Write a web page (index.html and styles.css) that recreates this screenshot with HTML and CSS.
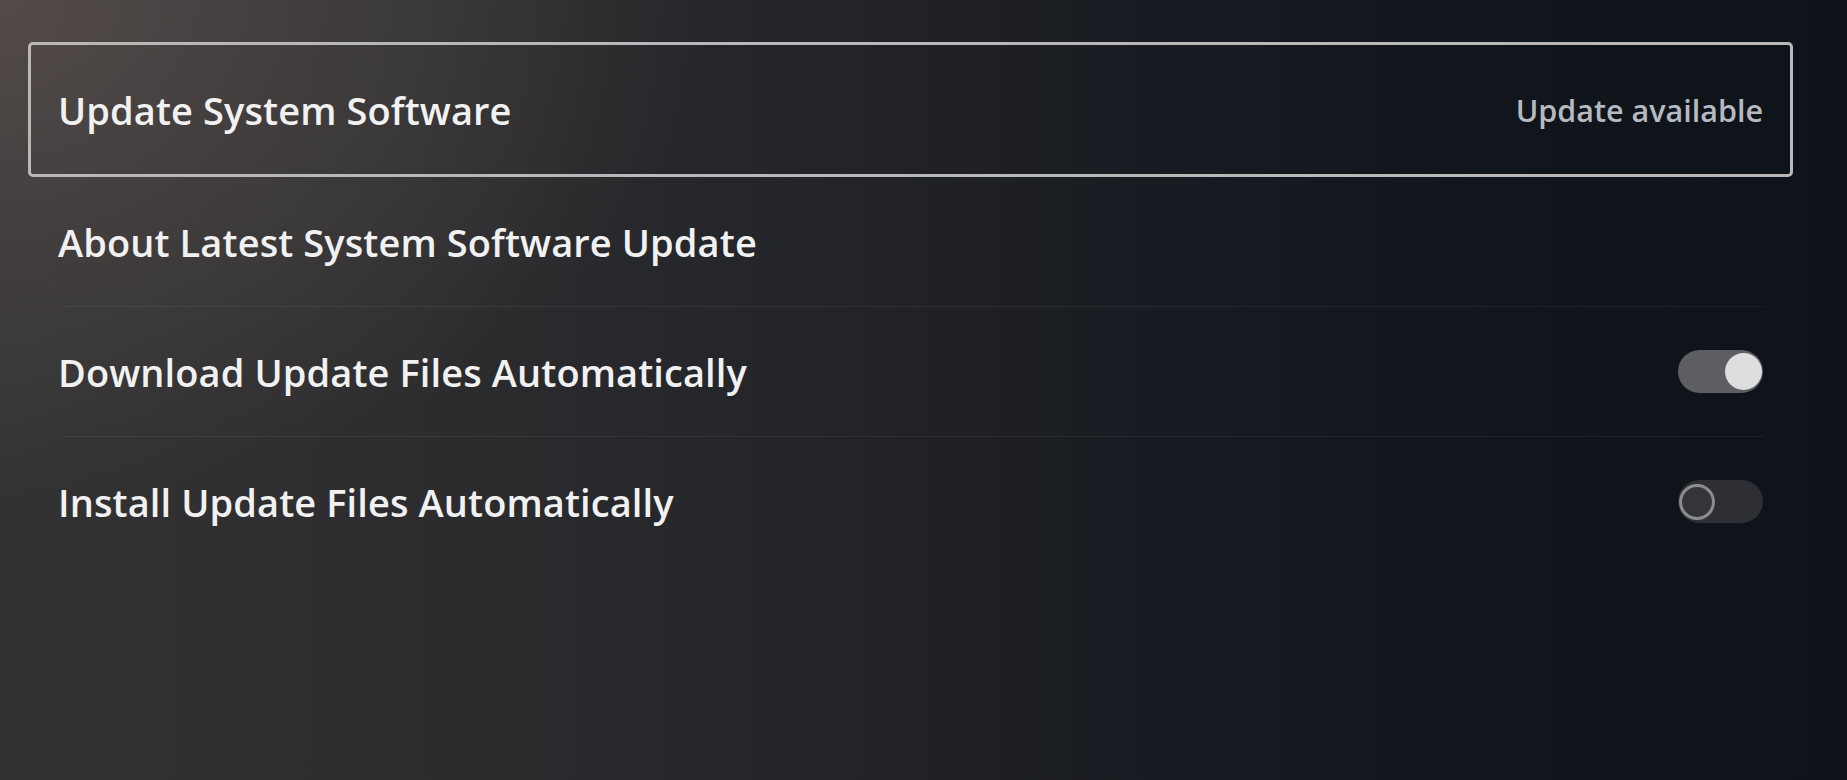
FILE: index.html
```html
<!DOCTYPE html>
<html lang="en">
<head>
<meta charset="utf-8">
<title>System Software</title>
<link rel="stylesheet" href="styles.css">
</head>
<body>
<div class="screen">
  <div class="list">
    <div class="item focused">
      <span class="label">Update System Software</span>
      <span class="value">Update available</span>
    </div>
    <div class="item">
      <span class="label">About Latest System Software Update</span>
    </div>
    <div class="sep"></div>
    <div class="item">
      <span class="label">Download Update Files Automatically</span>
      <span class="toggle on"><span class="knob"></span></span>
    </div>
    <div class="sep"></div>
    <div class="item">
      <span class="label">Install Update Files Automatically</span>
      <span class="toggle off"><span class="knob"></span></span>
    </div>
  </div>
</div>
</body>
</html>
```

FILE: styles.css
```css
html, body {
  margin: 0;
  padding: 0;
  width: 100%;
  height: 100%;
}
body {
  font-family: "Open Sans", "Noto Sans", sans-serif;
  overflow: hidden;
}
.screen {
  width: 1847px;
  height: 780px;
  box-sizing: border-box;
  padding: 42px 54px 0 28px;
  background:
    radial-gradient(ellipse 700px 500px at 0% 0%, rgba(92, 82, 80, 0.75), rgba(92, 82, 80, 0) 100%),
    linear-gradient(90deg, #333233 0%, #2d2d2f 22%, #222429 45%, #171a20 65%, #10141b 85%, #0e1219 100%);
}
.list {
  display: flex;
  flex-direction: column;
  width: 1765px;
}
.item {
  display: flex;
  align-items: center;
  justify-content: space-between;
  height: 129px;
  padding: 0 30px;
  box-sizing: border-box;
}
.item.focused {
  height: 135px;
  padding: 0 27px;
  border: 3px solid #b9b7b7;
  border-radius: 5px;
}
.label {
  color: #f1f1f1;
  font-size: 38px;
  font-weight: 600;
  letter-spacing: 0.1px;
}
.value {
  color: #b6b9bf;
  font-size: 30.5px;
  font-weight: 600;
}
.sep {
  height: 1px;
  margin: 0 30px 0 33px;
  background: rgba(255, 255, 255, 0.06);
}
.toggle {
  position: relative;
  display: block;
  width: 85px;
  height: 43px;
  border-radius: 22px;
}
.toggle.on {
  background: #5d5e63;
}
.toggle.off {
  background: #2d2f35;
}
.toggle .knob {
  position: absolute;
  top: 3px;
  width: 37px;
  height: 37px;
  border-radius: 50%;
  box-sizing: border-box;
}
.toggle.on .knob {
  right: 1px;
  background: #dedede;
}
.toggle.off .knob {
  left: 1px;
  top: 4px;
  width: 36px;
  height: 36px;
  background: #33353a;
  border: 3px solid #8a8c90;
}
```
